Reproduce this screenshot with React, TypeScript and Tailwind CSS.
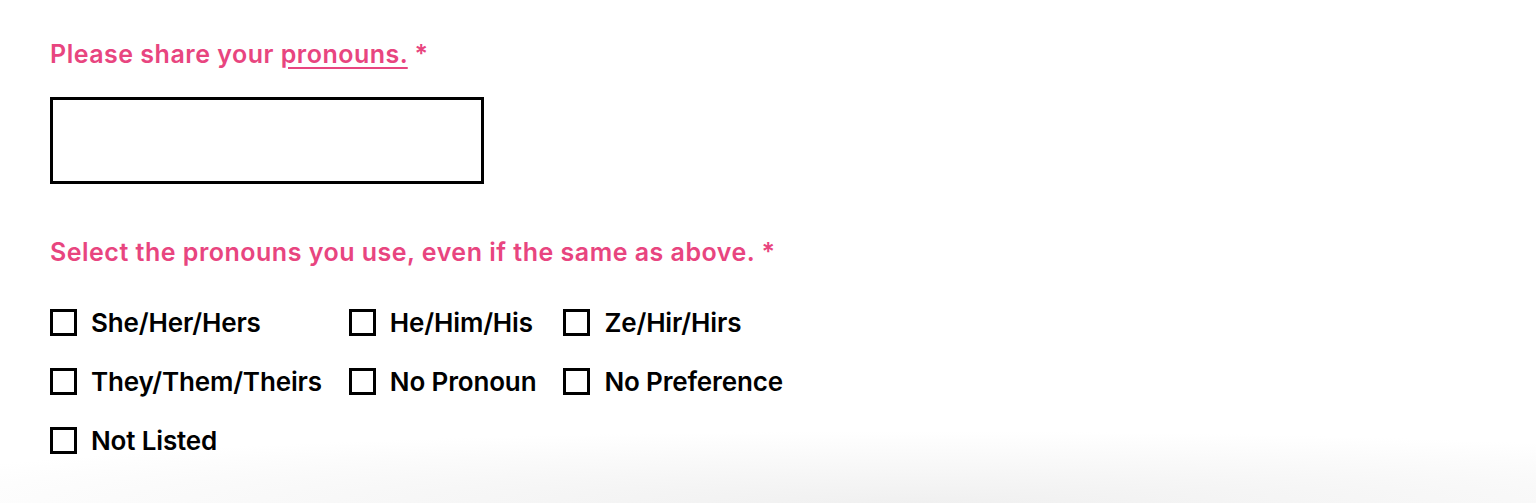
import React from "react";

const options = [
  "She/Her/Hers",
  "He/Him/His",
  "Ze/Hir/Hirs",
  "They/Them/Theirs",
  "No Pronoun",
  "No Preference",
  "Not Listed",
];

const Checkbox = ({ label }: { label: string }) => (
  <label className="flex items-center gap-[14px] cursor-pointer">
    <span className="w-[27px] h-[27px] border-[3px] border-black bg-white shrink-0" />
    <span className="text-[26px] leading-none font-semibold text-black tracking-[-0.15px]">{label}</span>
  </label>
);

export default function App() {
  return (
    <div
      className="w-[1536px] h-[503px] overflow-hidden bg-white relative"
      style={{ fontFamily: "Inter, 'Liberation Sans', sans-serif" }}
    >
      {/* soft page shadow along the bottom */}
      <div className="absolute inset-x-0 bottom-0 h-[90px] bg-[radial-gradient(90%_100%_at_60%_100%,#f0f0f0,rgba(255,255,255,0)_80%)] pointer-events-none" />
      <form className="relative pl-[50px] pt-[40px]">
        <p className="text-[25px] leading-[28px] font-semibold text-[#e8457f] tracking-[0.5px]">
          Please share your <span className="underline underline-offset-4 decoration-2">pronouns.</span> *
        </p>
        <input
          type="text"
          className="mt-[29px] block w-[434px] h-[87px] border-[3px] border-black bg-white outline-none"
        />
        <p className="mt-[54px] text-[25px] leading-[28px] font-semibold text-[#e8457f] tracking-[0.5px]">
          Select the pronouns you use, even if the same as above. *
        </p>
        <div className="mt-[43px] grid grid-cols-[auto_auto_auto] justify-start gap-x-[27px] gap-y-[32px]">
          {options.map((o) => (
            <Checkbox key={o} label={o} />
          ))}
        </div>
      </form>
    </div>
  );
}
